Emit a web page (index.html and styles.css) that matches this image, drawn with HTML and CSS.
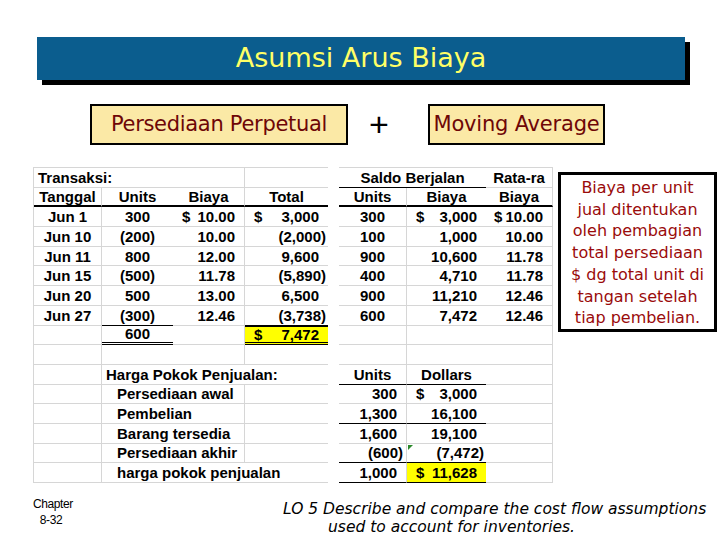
FILE: index.html
```html
<!DOCTYPE html>
<html>
<head>
<meta charset="utf-8">
<link rel="stylesheet" href="styles.css">
</head>
<body>
<div class="slide">
  <div class="title">Asumsi Arus Biaya</div>
  <div class="labels">
    <div class="label l1">Persediaan Perpetual</div>
    <div class="plus">+</div>
    <div class="label l2">Moving Average</div>
  </div>
  <div class="main">
    <div class="sheet">
      <div class="grid left">
        <!-- row 1 -->
        <div class="c s3 vr lft">Transaksi:</div>
        <div class="c"></div>
        <!-- row 2 -->
        <div class="c vr ctr hb">Tanggal</div>
        <div class="c ctr hb">Units</div>
        <div class="c ctr vr hb">Biaya</div>
        <div class="c ctr hb">Total</div>
        <!-- row 3 -->
        <div class="c vr ctr">Jun 1</div>
        <div class="c ctr">300</div>
        <div class="c vr acc"><span>$</span><span>10.00</span></div>
        <div class="c acc"><span>$</span><span>3,000</span></div>
        <!-- row 4 -->
        <div class="c vr ctr">Jun 10</div>
        <div class="c ctr">(200)</div>
        <div class="c vr num">10.00</div>
        <div class="c num neg">(2,000)</div>
        <!-- row 5 -->
        <div class="c vr ctr">Jun 11</div>
        <div class="c ctr">800</div>
        <div class="c vr num">12.00</div>
        <div class="c num">9,600</div>
        <!-- row 6 -->
        <div class="c vr ctr">Jun 15</div>
        <div class="c ctr">(500)</div>
        <div class="c vr num">11.78</div>
        <div class="c num neg">(5,890)</div>
        <!-- row 7 -->
        <div class="c vr ctr">Jun 20</div>
        <div class="c ctr">500</div>
        <div class="c vr num">13.00</div>
        <div class="c num">6,500</div>
        <!-- row 8 -->
        <div class="c vr ctr">Jun 27</div>
        <div class="c ctr bb">(300)</div>
        <div class="c vr num">12.46</div>
        <div class="c num neg bb">(3,738)</div>
        <!-- row 9 -->
        <div class="c vr"></div>
        <div class="c ctr db">600</div>
        <div class="c vr"></div>
        <div class="c acc db yel"><span>$</span><span>7,472</span></div>
        <!-- row 10 -->
        <div class="c vr"></div>
        <div class="c"></div>
        <div class="c vr"></div>
        <div class="c"></div>
        <!-- row 11 -->
        <div class="c vr"></div>
        <div class="c s3 lft">Harga Pokok Penjualan:</div>
        <!-- row 12 -->
        <div class="c vr"></div>
        <div class="c s2 vr ind">Persediaan awal</div>
        <div class="c"></div>
        <!-- row 13 -->
        <div class="c vr"></div>
        <div class="c s2 vr ind">Pembelian</div>
        <div class="c"></div>
        <!-- row 14 -->
        <div class="c vr"></div>
        <div class="c s2 vr ind">Barang tersedia</div>
        <div class="c"></div>
        <!-- row 15 -->
        <div class="c vr"></div>
        <div class="c s2 vr ind">Persediaan akhir</div>
        <div class="c"></div>
        <!-- row 16 -->
        <div class="c vr"></div>
        <div class="c s3 ind">harga pokok penjualan</div>
      </div>

      <div class="grid right">
        <!-- row 1 -->
        <div class="c s2 ctr bb">Saldo Berjalan</div>
        <div class="c ctr vr">Rata-ra</div>
        <!-- row 2 -->
        <div class="c ctr vr hb">Units</div>
        <div class="c ctr hb">Biaya</div>
        <div class="c ctr vr hb">Biaya</div>
        <!-- row 3 -->
        <div class="c ctr vr">300</div>
        <div class="c acc"><span>$</span><span>3,000</span></div>
        <div class="c acc vr h"><span>$</span><span>10.00</span></div>
        <!-- row 4 -->
        <div class="c ctr vr">100</div>
        <div class="c num">1,000</div>
        <div class="c num vr h">10.00</div>
        <!-- row 5 -->
        <div class="c ctr vr">900</div>
        <div class="c num">10,600</div>
        <div class="c num vr h">11.78</div>
        <!-- row 6 -->
        <div class="c ctr vr">400</div>
        <div class="c num">4,710</div>
        <div class="c num vr h">11.78</div>
        <!-- row 7 -->
        <div class="c ctr vr">900</div>
        <div class="c num">11,210</div>
        <div class="c num vr h">12.46</div>
        <!-- row 8 -->
        <div class="c ctr vr">600</div>
        <div class="c num">7,472</div>
        <div class="c num vr h">12.46</div>
        <!-- row 9 -->
        <div class="c vr"></div>
        <div class="c"></div>
        <div class="c vr"></div>
        <!-- row 10 -->
        <div class="c vr"></div>
        <div class="c"></div>
        <div class="c vr"></div>
        <!-- row 11 -->
        <div class="c ctr vr bb">Units</div>
        <div class="c ctr bb">Dollars</div>
        <div class="c vr"></div>
        <!-- row 12 -->
        <div class="c num vr">300</div>
        <div class="c acc"><span>$</span><span>3,000</span></div>
        <div class="c vr"></div>
        <!-- row 13 -->
        <div class="c num vr bb">1,300</div>
        <div class="c num bb">16,100</div>
        <div class="c vr"></div>
        <!-- row 14 -->
        <div class="c num vr">1,600</div>
        <div class="c num">19,100</div>
        <div class="c vr"></div>
        <!-- row 15 -->
        <div class="c num neg vr bb">(600)</div>
        <div class="c num neg bb tri">(7,472)</div>
        <div class="c vr"></div>
        <!-- row 16 -->
        <div class="c num vr bb">1,000</div>
        <div class="c acc bb yel"><span>$</span><span>11,628</span></div>
        <div class="c vr"></div>
      </div>
    </div>
    <div class="callout">Biaya per unit<br>jual ditentukan<br>oleh pembagian<br>total persediaan<br>$ dg total unit di<br>tangan setelah<br>tiap pembelian.</div>
  </div>
  <div class="footer">
    <div class="chapter">Chapter<br>8-32</div>
    <div class="lo">LO 5 Describe and compare the cost flow assumptions<br>used to account for inventories.</div>
  </div>
</div>
</body>
</html>
```

FILE: styles.css
```css
html, body {
  margin: 0;
  padding: 0;
  background: #ffffff;
}

.slide {
  width: 720px;
  height: 540px;
  overflow: hidden;
  position: relative;
  font-family: "DejaVu Sans", sans-serif;
}

.title {
  margin: 37px 0 0 37px;
  width: 648px;
  height: 43px;
  background: #0b5d8e;
  box-shadow: 5px 5px 0 #000;
  color: #ffff66;
  font-size: 27px;
  line-height: 42px;
  text-align: center;
}

.labels {
  display: flex;
  align-items: center;
  margin-top: 24px;
  padding-left: 90px;
  height: 41px;
}

.label {
  box-sizing: border-box;
  height: 41px;
  border: 2px solid #000;
  background: #fbe9a6;
  color: #6e0606;
  font-size: 21px;
  line-height: 37px;
  text-align: center;
  white-space: nowrap;
}

.l1 { width: 258px; letter-spacing: -0.3px; }
.l2 { width: 177px; letter-spacing: -0.2px; }

.plus {
  width: 80px;
  text-align: center;
  font-size: 34px;
  line-height: 41px;
  color: #000;
  padding-right: 18px;
  box-sizing: border-box;
  font-family: "Liberation Sans", sans-serif;
}

.main {
  display: flex;
  align-items: flex-start;
  margin-top: 22px;
  padding-left: 33px;
}

.sheet {
  display: flex;
  gap: 11px;
  font-family: "Liberation Sans", Arial, sans-serif;
  font-weight: bold;
  font-size: 15px;
  color: #000;
}

.grid {
  display: grid;
  grid-auto-rows: 19.7px;
  border-top: 1px solid #d6d6d6;
}

.left {
  grid-template-columns: 68px 71px 72px 83px;
  border-left: 1px solid #d6d6d6;
}

.right {
  grid-template-columns: 68px 79px 67px;
}

.c {
  box-sizing: border-box;
  border-bottom: 1px solid #d6d6d6;
  display: flex;
  align-items: center;
  white-space: nowrap;
  overflow: visible;
  min-width: 0;
}

.vr { border-right: 1px solid #d6d6d6; }
.s2 { grid-column: span 2; }
.s3 { grid-column: span 3; }

.ctr { justify-content: center; }
.lft { padding-left: 4px; }
.ind { padding-left: 15px; }

.num {
  justify-content: flex-end;
  padding-right: 9px;
}
.num.neg { padding-right: 2px; }

.acc {
  justify-content: space-between;
  padding-left: 9px;
  padding-right: 9px;
}
.right .h.acc { padding-left: 8px; }
.right .neg.vr { padding-right: 3px; }

.hb { border-bottom: 2px solid #000; }
.bb { border-bottom: 1px solid #000; }
.db { border-bottom: 3px double #000; }

.yel { background: #ffff00; }
.left .yel { border-top: 1px solid #000; }

.tri { position: relative; }
.tri::before {
  content: "";
  position: absolute;
  left: 1px;
  top: 1px;
  border-top: 5px solid #2a8a2a;
  border-right: 5px solid transparent;
}

.callout {
  box-sizing: border-box;
  margin: 5px 0 0 5px;
  width: 159px;
  height: 160px;
  border: 3px solid #000;
  background: #fff;
  color: #9a0b0b;
  font-size: 16px;
  line-height: 21.7px;
  text-align: center;
  white-space: nowrap;
  padding: 2px 0 0;
}

.footer {
  display: flex;
  align-items: flex-start;
  margin-top: 13px;
  padding-left: 33px;
}

.chapter {
  width: 36px;
  font-family: "Liberation Sans", Arial, sans-serif;
  font-size: 12px;
  line-height: 16px;
  letter-spacing: -0.4px;
  text-align: center;
  color: #000;
}

.lo {
  margin-left: 214px;
  margin-top: 4px;
  font-style: italic;
  font-size: 15.5px;
  line-height: 18px;
  color: #000;
  white-space: nowrap;
  padding-left: 45px;
  text-indent: -45px;
}
```
